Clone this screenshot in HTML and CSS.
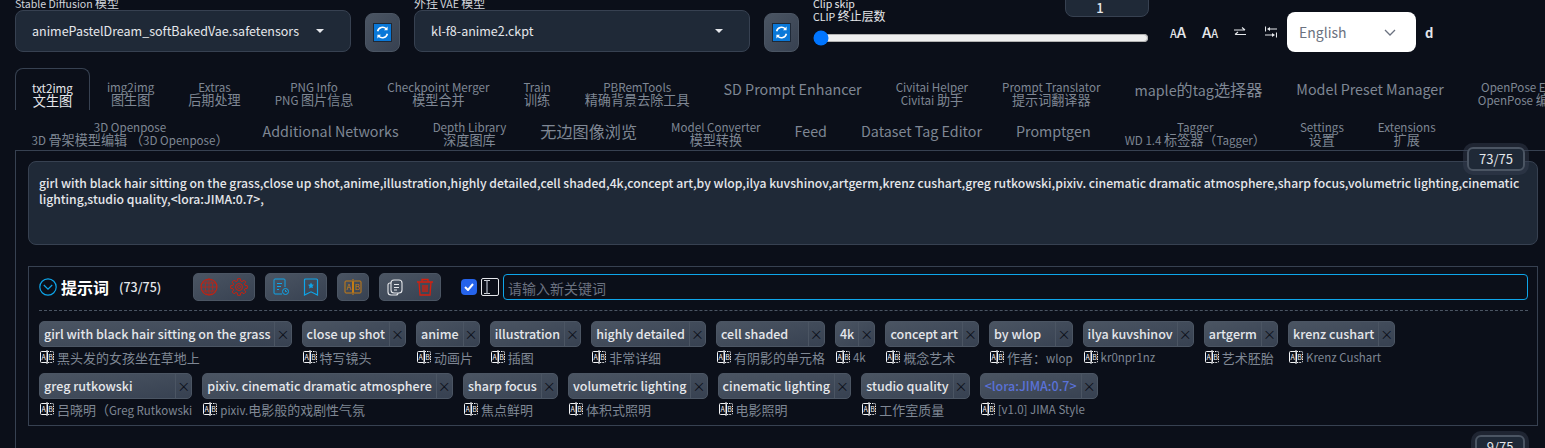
FILE: index.html
```html
<!DOCTYPE html>
<html lang="zh">
<head>
    <meta charset="UTF-8">
    <title>Stable Diffusion</title>
    <link rel="stylesheet" href="styles.css">
</head>
<body>
    <svg class="sprite" width="0" height="0">
        <symbol id="trans" viewBox="0 0 14 14">
            <rect x="0.5" y="1.5" width="7" height="11" rx="1" fill="none" stroke="#f3f4f6"/>
            <path d="M7.5 1.5h5a1 1 0 0 1 1 1v9a1 1 0 0 1-1 1h-5" fill="none" stroke="#f3f4f6" stroke-dasharray="1.5 1"/>
            <path d="M7 0v14" stroke="#f3f4f6"/>
            <text x="3.6" y="10" font-size="7" text-anchor="middle" fill="#f3f4f6">A</text>
            <text x="10.5" y="10" font-size="7" text-anchor="middle" fill="#f3f4f6">B</text>
        </symbol>
        <symbol id="refresh" viewBox="0 0 19 19">
            <rect width="19" height="19" fill="#1f2937"/>
            <rect x="1" y="1" width="17" height="17" fill="#0a78d8"/>
            <path d="M4.600 8.200a5.100 5.100 0 0 1 8.600-2.400M14.400 10.800a5.100 5.100 0 0 1-8.600 2.400" fill="none" stroke="#fff" stroke-width="1.600"/>
            <path d="M14.600 3.600v3.600h-3.600zM4.400 15.400v-3.600h3.600z" fill="#fff"/>
        </symbol>
    </svg>

    <div class="top-row">
        <div class="model-col">
            <div class="field-label">Stable Diffusion <span class="cn">模型</span></div>
            <div class="dropdown">
                <span>animePastelDream_softBakedVae.safetensors</span>
                <i class="caret"></i>
            </div>
        </div>
        <button class="refresh-btn"><svg width="19" height="19"><use href="#refresh"/></svg></button>
        <div class="model-col">
            <div class="field-label"><span class="cn">外挂</span> VAE <span class="cn">模型</span></div>
            <div class="dropdown">
                <span>kl-f8-anime2.ckpt</span>
                <i class="caret"></i>
            </div>
        </div>
        <button class="refresh-btn"><svg width="19" height="19"><use href="#refresh"/></svg></button>
        <div class="clip-col">
            <div class="clip-head">
                <div class="clip-label">Clip skip<br>CLIP <span class="cn">终止层数</span></div>
                <div class="clip-number">1</div>
            </div>
            <input class="clip-slider" type="range" min="1" max="12" value="1">
        </div>
        <div class="tool-icons">
            <span class="aa"><small>A</small>A</span>
            <span class="aa">A<small>A</small></span>
            <svg width="12" height="12" viewBox="0 0 12 12" fill="none" stroke="#e5e7eb" stroke-width="1.100"><path d="M0 4h11M8 1.500 11 4M12 8.500H1M4 6 1 8.500"/></svg>
            <svg width="12" height="12" viewBox="0 0 12 12" fill="none" stroke="#e5e7eb" stroke-width="1.100"><path d="M.5 .5v5M5 3h7M11.500 6.500v5M0 9h7"/><path d="M5 1 2 3l3 2zM7 7l3 2-3 2z" fill="#e5e7eb" stroke="none"/></svg>
        </div>
        <div class="lang-select">
            <span>English</span>
            <svg width="12" height="7" viewBox="0 0 12 7" fill="none" stroke="#6b7280" stroke-width="1.300"><path d="M1 1l5 5 5-5"/></svg>
        </div>
        <div class="lang-d">d</div>
    </div>

    <div class="tab-row tab-row-first">
        <div class="tab active">txt2img<br><span class="cn">文生图</span></div>
        <div class="tab">img2img<br><span class="cn">图生图</span></div>
        <div class="tab">Extras<br><span class="cn">后期处理</span></div>
        <div class="tab">PNG Info<br>PNG <span class="cn">图片信息</span></div>
        <div class="tab">Checkpoint Merger<br><span class="cn">模型合并</span></div>
        <div class="tab">Train<br><span class="cn">训练</span></div>
        <div class="tab">PBRemTools<br><span class="cn">精确背景去除工具</span></div>
        <div class="tab single">SD Prompt Enhancer</div>
        <div class="tab">Civitai Helper<br>Civitai <span class="cn">助手</span></div>
        <div class="tab">Prompt Translator<br><span class="cn">提示词翻译器</span></div>
        <div class="tab single">maple<span class="cn">的</span>tag<span class="cn">选择器</span></div>
        <div class="tab single">Model Preset Manager</div>
        <div class="tab">OpenPose Editor<br>OpenPose <span class="cn">编辑器</span></div>
    </div>
    <div class="tab-row tab-row-second">
        <div class="tab">3D Openpose<br>3D <span class="cn">骨架模型编辑 （</span>3D Openpose<span class="cn">）</span></div>
        <div class="tab single">Additional Networks</div>
        <div class="tab">Depth Library<br><span class="cn">深度图库</span></div>
        <div class="tab single"><span class="cn">无边图像浏览</span></div>
        <div class="tab">Model Converter<br><span class="cn">模型转换</span></div>
        <div class="tab single">Feed</div>
        <div class="tab single">Dataset Tag Editor</div>
        <div class="tab single">Promptgen</div>
        <div class="tab">Tagger<br>WD 1.4 <span class="cn">标签器（</span>Tagger<span class="cn">）</span></div>
        <div class="tab">Settings<br><span class="cn">设置</span></div>
        <div class="tab">Extensions<br><span class="cn">扩展</span></div>
    </div>

    <div class="tab-content">
        <div class="prompt-box">
            <div class="token-counter">73/75</div>
            <textarea class="prompt-input" readonly>girl with black hair sitting on the grass,close up shot,anime,illustration,highly detailed,cell shaded,4k,concept art,by wlop,ilya kuvshinov,artgerm,krenz cushart,greg rutkowski,pixiv. cinematic dramatic atmosphere,sharp focus,volumetric lighting,cinematic lighting,studio quality,&lt;lora:JIMA:0.7&gt;,</textarea>
        </div>

        <div class="tag-panel">
            <div class="panel-head">
                <svg class="chevron" width="18" height="18" viewBox="0 0 18 18" fill="none" stroke="#0ea5e9" stroke-width="1.200"><circle cx="9" cy="9" r="8.200"/><path d="M4.800 7l4.200 4.200L13.200 7"/></svg>
                <span class="panel-title">提示词</span>
                <span class="panel-count">(73/75)</span>
                <div class="btn-group">
                    <svg width="18" height="18" viewBox="0 0 18 18" fill="none" stroke="#c8200f" stroke-width="0.700"><circle cx="9" cy="9" r="8" stroke-width="1.100"/><ellipse cx="9" cy="9" rx="3.800" ry="8"/><path d="M1 9h16M2 5h14M2 13h14M9 1v16"/></svg>
                    <svg width="18" height="18" viewBox="0 0 18 18" fill="none" stroke="#c8200f"><polygon points="7.29,3.04 7.69,.7 10.31,.7 10.71,3.04 12.01,3.58 13.94,2.2 15.8,4.06 14.42,5.99 14.96,7.29 17.3,7.69 17.3,10.31 14.96,10.71 14.42,12.01 15.8,13.94 13.94,15.8 12.01,14.42 10.71,14.96 10.31,17.3 7.69,17.3 7.29,14.96 5.99,14.42 4.06,15.8 2.2,13.94 3.58,12.01 3.04,10.71 .7,10.31 .7,7.69 3.04,7.29 3.58,5.99 2.2,4.06 4.06,2.2 5.99,3.58"/><circle cx="9" cy="9" r="3.500"/><circle cx="9" cy="9" r="1.500" stroke-width="0.700"/></svg>
                </div>
                <div class="btn-group">
                    <svg width="18" height="18" viewBox="0 0 18 18" fill="none" stroke="#0ea5e9"><path d="M10 16H3a1 1 0 0 1-1-1V2a1 1 0 0 1 1-1h9a1 1 0 0 1 1 1v7"/><path d="M5 5.500h5M5 8.500h4M5 11.500h2"/><circle cx="13.500" cy="13.500" r="3"/><path d="M13.500 12v1.500h1.300"/></svg>
                    <svg width="18" height="18" viewBox="0 0 18 18" fill="none" stroke="#0ea5e9" stroke-width="1.200"><path d="M2.500 2a1 1 0 0 1 1-1h11a1 1 0 0 1 1 1v15L9 13.800 2.500 17z"/><path d="M9 4.500l1 1.900 2 .3-1.500 1.400.4 2L9 9.600l-1.900 1 .4-2L6 6.700l2-.3z" fill="#0ea5e9" stroke="none"/></svg>
                </div>
                <div class="btn-group btn-group-one">
                    <svg width="18" height="18" viewBox="0 0 18 18" fill="none" stroke="#c77d14"><rect x="1" y="3" width="7.500" height="12" rx="1"/><rect x="9.500" y="3" width="7.500" height="12" rx="1"/><path d="M9 1v16"/><text x="4.800" y="12" font-size="8" text-anchor="middle" fill="#c77d14" stroke="none">A</text><text x="13.200" y="12" font-size="8" text-anchor="middle" fill="#c77d14" stroke="none">B</text></svg>
                </div>
                <div class="btn-group">
                    <svg width="18" height="18" viewBox="0 0 18 18" fill="none" stroke="#e5e7eb" stroke-width="1.100"><rect x="5" y="2" width="11" height="13" rx="3"/><path d="M5 5H4a2 2 0 0 0-2 2v7a3 3 0 0 0 3 3h5a2 2 0 0 0 2-2"/><path d="M8 6.500h5M8 9.500h5M8 12h3"/></svg>
                    <svg width="18" height="18" viewBox="0 0 18 18" fill="none" stroke="#d4200f" stroke-width="1.300"><path d="M1 4h16M6 4V1.500h6V4M3 4l1 13h10l1-13M7 7v7M9 7v7M11 7v7"/></svg>
                </div>
                <div class="edit-check">
                    <svg width="10" height="8" viewBox="0 0 10 8" fill="none" stroke="#fff" stroke-width="2"><path d="M1 4l3 3 5-6"/></svg>
                </div>
                <div class="cursor-box">
                    <svg width="8" height="14" viewBox="0 0 8 14" fill="none" stroke="#d1d5db"><path d="M1 .5h6M1 13.500h6"/><path d="M4 .5v13" stroke="#9ca3af" stroke-width="1.400"/></svg>
                </div>
                <input class="new-tag" type="text" placeholder="请输入新关键词">
            </div>

            <div class="tag-list">
                <div class="tag-item"><div class="tag"><span class="tag-text">girl with black hair sitting on the grass</span><span class="tag-close">×</span></div><div class="tag-trans"><svg width="14" height="14"><use href="#trans"/></svg><span class="cn">黑头发的女孩坐在草地上</span></div></div>
                <div class="tag-item"><div class="tag"><span class="tag-text">close up shot</span><span class="tag-close">×</span></div><div class="tag-trans"><svg width="14" height="14"><use href="#trans"/></svg><span class="cn">特写镜头</span></div></div>
                <div class="tag-item"><div class="tag"><span class="tag-text">anime</span><span class="tag-close">×</span></div><div class="tag-trans"><svg width="14" height="14"><use href="#trans"/></svg><span class="cn">动画片</span></div></div>
                <div class="tag-item"><div class="tag"><span class="tag-text">illustration</span><span class="tag-close">×</span></div><div class="tag-trans"><svg width="14" height="14"><use href="#trans"/></svg><span class="cn">插图</span></div></div>
                <div class="tag-item"><div class="tag"><span class="tag-text">highly detailed</span><span class="tag-close">×</span></div><div class="tag-trans"><svg width="14" height="14"><use href="#trans"/></svg><span class="cn">非常详细</span></div></div>
                <div class="tag-item"><div class="tag"><span class="tag-text">cell shaded</span><span class="tag-close">×</span></div><div class="tag-trans"><svg width="14" height="14"><use href="#trans"/></svg><span class="cn">有阴影的单元格</span></div></div>
                <div class="tag-item"><div class="tag"><span class="tag-text">4k</span><span class="tag-close">×</span></div><div class="tag-trans"><svg width="14" height="14"><use href="#trans"/></svg><span>4k</span></div></div>
                <div class="tag-item"><div class="tag"><span class="tag-text">concept art</span><span class="tag-close">×</span></div><div class="tag-trans"><svg width="14" height="14"><use href="#trans"/></svg><span class="cn">概念艺术</span></div></div>
                <div class="tag-item"><div class="tag"><span class="tag-text">by wlop</span><span class="tag-close">×</span></div><div class="tag-trans"><svg width="14" height="14"><use href="#trans"/></svg><span><span class="cn">作者：</span>wlop</span></div></div>
                <div class="tag-item"><div class="tag"><span class="tag-text">ilya kuvshinov</span><span class="tag-close">×</span></div><div class="tag-trans"><svg width="14" height="14"><use href="#trans"/></svg><span>kr0npr1nz</span></div></div>
                <div class="tag-item"><div class="tag"><span class="tag-text">artgerm</span><span class="tag-close">×</span></div><div class="tag-trans"><svg width="14" height="14"><use href="#trans"/></svg><span class="cn">艺术胚胎</span></div></div>
                <div class="tag-item"><div class="tag"><span class="tag-text">krenz cushart</span><span class="tag-close">×</span></div><div class="tag-trans"><svg width="14" height="14"><use href="#trans"/></svg><span>Krenz Cushart</span></div></div>
                <div class="tag-item"><div class="tag"><span class="tag-text">greg rutkowski</span><span class="tag-close">×</span></div><div class="tag-trans"><svg width="14" height="14"><use href="#trans"/></svg><span><span class="cn">吕晓明（</span>Greg Rutkowski</span></div></div>
                <div class="tag-item"><div class="tag"><span class="tag-text">pixiv. cinematic dramatic atmosphere</span><span class="tag-close">×</span></div><div class="tag-trans"><svg width="14" height="14"><use href="#trans"/></svg><span>pixiv.<span class="cn">电影般的戏剧性气氛</span></span></div></div>
                <div class="tag-item"><div class="tag"><span class="tag-text">sharp focus</span><span class="tag-close">×</span></div><div class="tag-trans"><svg width="14" height="14"><use href="#trans"/></svg><span class="cn">焦点鲜明</span></div></div>
                <div class="tag-item"><div class="tag"><span class="tag-text">volumetric lighting</span><span class="tag-close">×</span></div><div class="tag-trans"><svg width="14" height="14"><use href="#trans"/></svg><span class="cn">体积式照明</span></div></div>
                <div class="tag-item"><div class="tag"><span class="tag-text">cinematic lighting</span><span class="tag-close">×</span></div><div class="tag-trans"><svg width="14" height="14"><use href="#trans"/></svg><span class="cn">电影照明</span></div></div>
                <div class="tag-item"><div class="tag"><span class="tag-text">studio quality</span><span class="tag-close">×</span></div><div class="tag-trans"><svg width="14" height="14"><use href="#trans"/></svg><span class="cn">工作室质量</span></div></div>
                <div class="tag-item"><div class="tag"><span class="tag-text tag-lora">&lt;lora:JIMA:0.7&gt;</span><span class="tag-close">×</span></div><div class="tag-trans"><svg width="14" height="14"><use href="#trans"/></svg><span>[v1.0] JIMA Style</span></div></div>
            </div>
        </div>
        <div class="next-counter"><div class="token-counter-low">9/75</div></div>
    </div>
</body>
</html>
```

FILE: styles.css
```css
html, body {
    height: 448px;
    overflow: hidden;
}
body {
    margin: 0;
    background-color: #0b0f19;
    color: #e5e7eb;
    font-family: "Noto Sans CJK SC", "Noto Sans", sans-serif;
    font-size: 13px;
}
.sprite {
    display: block;
    height: 0;
}
/* the latin glyphs of this font run large, so chinese text gets bumped up */
.cn {
    font-size: 1.13em;
}

/* top row */
.top-row {
    display: flex;
    align-items: flex-start;
    height: 68px;
    padding-left: 15px;
    box-sizing: border-box;
}
.model-col {
    width: 336px;
}
.field-label {
    height: 14px;
    margin-top: -4px;
    font-size: 10.6px;
    line-height: 13px;
    color: #d1d5db;
}
.dropdown {
    display: flex;
    align-items: center;
    justify-content: space-between;
    box-sizing: border-box;
    height: 42px;
    padding: 0 26px 2px 16px;
    background-color: #1f2937;
    border: 1px solid #374151;
    border-radius: 8px;
    font-size: 12.5px;
}
.caret {
    border-left: 4px solid transparent;
    border-right: 4px solid transparent;
    border-top: 4px solid #e5e7eb;
    margin-top: 2px;
}
.refresh-btn {
    display: flex;
    align-items: center;
    justify-content: center;
    width: 35px;
    height: 39px;
    padding: 0;
    margin: 13px 14px 0;
    border: 1px solid #4b5563;
    border-radius: 8px;
    background: linear-gradient(to bottom right, #4b5563, #374151);
}
.clip-col {
    width: 336px;
}
.clip-head {
    display: flex;
    justify-content: space-between;
    align-items: flex-start;
    height: 30px;
}
.clip-label {
    margin-top: -2px;
    font-size: 10.6px;
    line-height: 12px;
    color: #e5e7eb;
}
.clip-number {
    width: 84px;
    height: 26px;
    margin-top: -9px;
    box-sizing: border-box;
    padding: 7px 14px 0 0;
    text-align: center;
    font-size: 13px;
    font-weight: 500;
    line-height: 18px;
    background-color: #1f2937;
    border: 1px solid #374151;
    border-radius: 8px;
}
.clip-slider {
    display: block;
    width: 336px;
    margin: 0;
}
.tool-icons {
    display: flex;
    align-items: center;
    gap: 15px;
    flex: none;
    width: 117px;
    height: 40px;
    margin: 12px 0 0 21px;
}
.aa {
    flex: none;
    width: 17px;
    font-size: 15px;
    font-weight: 500;
    line-height: 14px;
    white-space: nowrap;
}
.aa small {
    font-size: 11px;
}
.tool-icons svg {
    flex: none;
}
.tool-icons svg:last-child {
    margin-left: 4px;
}
.lang-select {
    display: flex;
    align-items: center;
    justify-content: space-between;
    flex: none;
    box-sizing: border-box;
    width: 129px;
    height: 40px;
    margin-top: 12px;
    padding: 0 20px 0 12px;
    background-color: #fff;
    border-radius: 8px;
    color: #6b7280;
    font-size: 14px;
}
.lang-d {
    margin: 24px 0 0 9px;
    font-size: 13px;
    font-weight: 700;
    line-height: 18px;
}

/* tabs */
.tab-row {
    display: flex;
    align-items: stretch;
    padding-left: 15px;
    overflow: hidden;
    white-space: nowrap;
}
.tab-row-first {
    height: 42px;
}
.tab-row-second {
    height: 40px;
    padding-left: 14.5px;
}
.tab {
    flex: none;
    box-sizing: border-box;
    padding: 13px 17px 0;
    color: #7f8794;
    font-size: 11.6px;
    line-height: 12.5px;
    text-align: center;
}
.tab.single {
    padding-top: 12px;
    font-size: 14.3px;
    line-height: 18px;
}
.tab.active {
    height: 43px;
    padding: 13px 16px 0;
    color: #e5e7eb;
    border: 1px solid #374151;
    border-bottom: 0;
    border-radius: 8px 8px 0 0;
}
.tab-row-second .tab {
    padding-top: 11px;
}
.tab-row-second .tab.single {
    padding-top: 12px;
}

/* main area */
.tab-content {
    height: 298px;
    box-sizing: border-box;
    margin-left: 15px;
    padding: 10px 7px 0 12px;
    border-top: 1px solid #374151;
    border-left: 1px solid #374151;
}
.prompt-box {
    position: relative;
}
.prompt-input {
    display: block;
    box-sizing: border-box;
    width: 100%;
    height: 84px;
    padding: 13px 10px 0;
    resize: none;
    background-color: #1f2937;
    border: 1px solid #374151;
    border-radius: 8px;
    color: #e5e7eb;
    font-family: inherit;
    font-size: 12.2px;
    font-weight: 500;
    line-height: 16px;
    outline: none;
    overflow: hidden;
}
.token-counter {
    position: absolute;
    top: -14px;
    right: 13px;
    width: 58px;
    height: 24px;
    box-sizing: border-box;
    background-color: #1f2937;
    border: 2px solid #4b5563;
    border-radius: 6px;
    box-shadow: 0 0 0 4px rgba(55, 65, 81, 0.45);
    font-size: 13px;
    line-height: 20px;
    text-align: center;
}
.tag-panel {
    height: 160px;
    margin-top: 21px;
    box-sizing: border-box;
    padding: 6px 9px 0 10px;
    border: 1px solid #374151;
}
.panel-head {
    display: flex;
    align-items: center;
    height: 27px;
    padding-bottom: 10px;
    border-bottom: 1px dashed #4b5563;
}
.chevron {
    flex: none;
}
.panel-title {
    margin-left: 4px;
    font-size: 16px;
    font-weight: 700;
    color: #fff;
}
.panel-count {
    flex: none;
    width: 74px;
    margin-left: 10px;
    font-size: 12.5px;
    font-weight: 500;
}
.btn-group {
    display: flex;
    align-items: center;
    justify-content: center;
    gap: 12px;
    flex: none;
    box-sizing: border-box;
    width: 62px;
    height: 28px;
    margin-right: 10px;
    border: 1px solid #4b5563;
    border-radius: 5px;
    background: linear-gradient(to bottom right, #4b5563, #374151);
}
.btn-group-one {
    width: 32px;
}
.edit-check {
    display: flex;
    align-items: center;
    justify-content: center;
    flex: none;
    width: 16px;
    height: 16px;
    margin: 0 4px 0 10px;
    background-color: #2563eb;
    border-radius: 4px;
}
.cursor-box {
    display: flex;
    align-items: center;
    box-sizing: border-box;
    flex: none;
    width: 18px;
    height: 18px;
    padding-left: 1px;
    margin-right: 4px;
    border: 1px solid #e5e7eb;
    border-radius: 2px;
}
.new-tag {
    flex: 1;
    min-width: 0;
    box-sizing: border-box;
    height: 26px;
    padding: 2px 4px 0;
    background: transparent;
    border: 1px solid #0ea5e9;
    border-radius: 4px;
    color: #e5e7eb;
    font-family: inherit;
    font-size: 14px;
    outline: none;
}
.new-tag::placeholder {
    color: #6b7280;
}
.tag-list {
    display: flex;
    flex-wrap: wrap;
    gap: 7px 10px;
    margin-top: 10px;
}
.tag-item {
    display: flex;
    flex-direction: column;
    height: 45px;
}
.tag {
    display: flex;
    justify-content: space-between;
    box-sizing: border-box;
    height: 26px;
    border: 1px solid #4b5563;
    border-radius: 5px;
    background: linear-gradient(to bottom right, #4b5563, #374151);
    font-size: 12.5px;
    font-weight: 500;
    line-height: 24px;
}
.tag-text {
    padding: 0 4px;
    white-space: nowrap;
}
.tag-lora {
    color: #5a72d8;
}
.tag-close {
    flex: none;
    width: 15.2px;
    border-left: 1px solid #4b5563;
    color: #0b0f19;
    font-size: 13px;
    font-weight: 400;
    text-align: center;
}
.tag-trans {
    display: flex;
    align-items: center;
    gap: 3px;
    box-sizing: border-box;
    height: 19px;
    padding: 1px 0 0 1px;
    color: #7f8794;
    font-size: 11.5px;
    white-space: nowrap;
}
.tag-trans svg {
    flex: none;
}
.next-counter {
    display: flex;
    justify-content: flex-end;
    padding: 9px 13px 0 0;
}
.token-counter-low {
    width: 50px;
    height: 24px;
    box-sizing: border-box;
    background-color: #1f2937;
    border: 2px solid #4b5563;
    border-radius: 6px;
    box-shadow: 0 0 0 4px rgba(55, 65, 81, 0.45);
    font-size: 13px;
    line-height: 20px;
    text-align: center;
}
```
